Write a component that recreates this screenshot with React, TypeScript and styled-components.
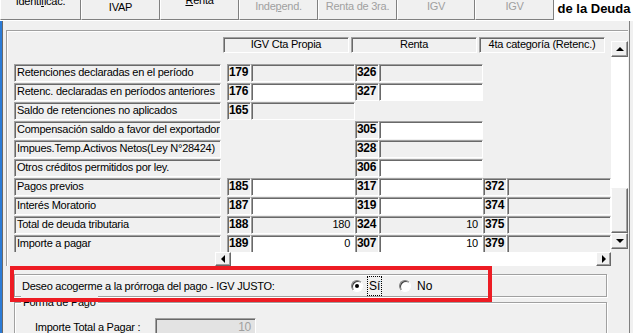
import React from "react";
import styled, { createGlobalStyle } from "styled-components";

const GlobalStyle = createGlobalStyle`
  html, body { margin: 0; padding: 0; background: #f0f0f0; }
  * { box-sizing: border-box; }
`;

const Page = styled.div`
  position: relative;
  width: 633px;
  height: 333px;
  overflow: hidden;
  display: flex;
  flex-direction: column;
  background: #f0f0f0;
  font-family: "Liberation Sans", Arial, sans-serif;
  font-size: 11px;
  letter-spacing: -0.25px;
  color: #000;
`;

const TabBar = styled.div`
  display: flex;
  height: 20px;
  flex: none;
`;

const Tab = styled.div<{ $w: number; $disabled?: boolean; $active?: boolean }>`
  width: ${(p) => p.$w}px;
  height: 20px;
  flex: none;
  overflow: hidden;
  text-align: center;
  background: ${(p) => (p.$active ? "#fff" : "#f0f0f0")};
  color: ${(p) => (p.$disabled ? "#a0a0a0" : "#000")};
  font-weight: ${(p) => (p.$active ? "bold" : "normal")};
  font-size: ${(p) => (p.$active ? "13px" : "11px")};
  letter-spacing: ${(p) => (p.$active ? "0" : "-0.25px")};
  border-left: 1px solid #fff;
  border-right: ${(p) => (p.$active ? "none" : "1px solid #808080")};
  border-bottom: ${(p) => (p.$active ? "none" : "1px solid #808080")};
  white-space: nowrap;
`;

const TabText = styled.span<{ $top: number }>`
  display: block;
  line-height: 12px;
  margin-top: ${(p) => p.$top}px;
`;

const Body = styled.div`
  flex: 1;
  display: flex;
  border-top: 1px solid #fff;
  min-height: 0;
`;

const LeftEdge = styled.div`
  width: 3px;
  flex: none;
  background: #2b7bd6;
  border-right: 1px solid #696969;
`;

const RightEdge = styled.div`
  width: 4px;
  flex: none;
  border-left: 1px solid #808080;
`;

const Main = styled.div`
  flex: 1;
  display: flex;
  flex-direction: column;
  padding: 9px 1px 0 3px;
  min-width: 0;
`;

const Panel = styled.div`
  display: flex;
  height: 236px;
  flex: none;
  padding: 6px 0 0 7px;
  border-top: 1px solid #a0a0a0;
  border-left: 1px solid #a0a0a0;
  box-shadow: inset 1px 1px #fff;
`;

const GridArea = styled.div`
  flex: 1;
  display: flex;
  flex-direction: column;
  min-width: 0;
`;

const HeaderRow = styled.div`
  display: flex;
  gap: 2px;
  height: 16px;
  padding-left: 209px;
  flex: none;
`;

const HeaderCell = styled.div`
  width: 126px;
  flex: none;
  text-align: center;
  line-height: 13px;
  border: 1px solid;
  border-color: #a0a0a0 #fff #fff #a0a0a0;
  box-shadow: inset 1px 1px #696969;
  white-space: nowrap;
  overflow: hidden;
`;

const RowsViewport = styled.div`
  margin-top: 11px;
  height: 188px;
  overflow: hidden;
  flex: none;
`;

const Row = styled.div`
  display: flex;
  height: 18px;
  margin-bottom: 1px;
`;

const Sunken = styled.div`
  height: 18px;
  flex: none;
  border: 1px solid;
  border-color: #a0a0a0 #fff #fff #a0a0a0;
  box-shadow: inset 1px 1px #696969;
  white-space: nowrap;
  overflow: hidden;
  line-height: 15px;
`;

const Label = styled(Sunken)`
  width: 207px;
  margin-right: 6px;
  padding-left: 2px;
`;

const Code = styled(Sunken)`
  width: 24px;
  font-weight: bold;
  font-size: 12px;
  letter-spacing: -0.3px;
  padding-left: 1px;
  background: #f0f0f0;
`;

const Field = styled(Sunken)<{ $editable?: boolean }>`
  width: 104px;
  text-align: right;
  padding-right: 4px;
  background: ${(p) => (p.$editable ? "#fff" : "#f0f0f0")};
`;

const Blank = styled.div`
  width: 128px;
  flex: none;
`;

const HScroll = styled.div`
  display: flex;
  height: 14px;
  margin-left: 201px;
  flex: none;
`;

const ScrollBtn = styled.div<{ $w: number; $h: number }>`
  width: ${(p) => p.$w}px;
  height: ${(p) => p.$h}px;
  flex: none;
  display: flex;
  align-items: center;
  justify-content: center;
  background: #f0f0f0;
  border: 1px solid;
  border-color: #fff #696969 #696969 #fff;
  box-shadow: inset -1px -1px #a0a0a0;
`;

const Track = styled.div<{ $h?: number }>`
  flex: ${(p) => (p.$h ? "none" : "1")};
  height: ${(p) => (p.$h ? `${p.$h}px` : "auto")};
  background: #fff;
`;

const VScroll = styled.div`
  width: 17px;
  flex: none;
  margin-top: 4px;
  height: 208px;
  display: flex;
  flex-direction: column;
`;

const Thumb = styled.div`
  height: 45px;
  flex: none;
  background: #f0f0f0;
  border: 1px solid;
  border-color: #f0f0f0 #696969 #696969 #fff;
  box-shadow: inset -1px -1px #a0a0a0;
`;

const Arrow = styled.div<{ $dir: "up" | "down" | "left" | "right" }>`
  width: 0;
  height: 0;
  border: 3px solid transparent;
  ${(p) =>
    p.$dir === "up"
      ? "border-bottom: 4px solid #000; border-top: none; border-left-width: 4px; border-right-width: 4px;"
      : p.$dir === "down"
      ? "border-top: 4px solid #000; border-bottom: none; border-left-width: 4px; border-right-width: 4px;"
      : p.$dir === "left"
      ? "border-right: 4px solid #000; border-left: none; border-top-width: 4px; border-bottom-width: 4px;"
      : "border-left: 4px solid #000; border-right: none; border-top-width: 4px; border-bottom-width: 4px;"}
`;

const GroupBox = styled.div<{ $mt: number; $h: number }>`
  margin: ${(p) => p.$mt}px 0 0 8px;
  width: 593px;
  height: ${(p) => p.$h}px;
  flex: none;
  border: 1px solid #a0a0a0;
  box-shadow: 1px 1px #fff, inset 1px 1px #fff;
`;

const QuestionRow = styled.div`
  display: flex;
  align-items: center;
  height: 100%;
  padding-left: 7px;
`;

const Question = styled.div`
  width: 329px;
  flex: none;
  white-space: nowrap;
`;

const RadioItem = styled.div<{ $w: number }>`
  display: flex;
  align-items: center;
  width: ${(p) => p.$w}px;
  flex: none;
`;

const RadioCircle = styled.div<{ $checked?: boolean }>`
  width: 12px;
  height: 12px;
  flex: none;
  border-radius: 50%;
  background: #fff;
  border: 1px solid;
  border-color: #808080 #fff #fff #808080;
  box-shadow: inset 1px 1px #404040;
  display: flex;
  align-items: center;
  justify-content: center;
  &::after {
    content: "";
    width: 4px;
    height: 4px;
    border-radius: 50%;
    background: ${(p) => (p.$checked ? "#000" : "transparent")};
  }
`;

const RadioText = styled.span<{ $focus?: boolean }>`
  margin-left: 4px;
  padding: 2px 1px;
  border: 1px dotted ${(p) => (p.$focus ? "#000" : "transparent")};
  font-size: 12px;
  letter-spacing: 0;
`;

const Legend = styled.div`
  width: fit-content;
  margin: -7px 0 0 6px;
  padding: 0 2px;
  background: #f0f0f0;
  line-height: 12px;
`;

const AmountRow = styled.div`
  display: flex;
  align-items: center;
  margin-top: 10px;
  padding-left: 20px;
`;

const AmountLabel = styled.div`
  width: 120px;
  flex: none;
  white-space: nowrap;
`;

const AmountField = styled.div`
  width: 101px;
  height: 18px;
  flex: none;
  text-align: right;
  padding-right: 4px;
  line-height: 16px;
  color: #a0a0a0;
  font-size: 12px;
  background: #e3e3e3;
  border: 1px solid;
  border-color: #a0a0a0 #fff #fff #a0a0a0;
  box-shadow: inset 1px 1px #696969;
`;

const RedMark = styled.div`
  position: absolute;
  left: 10px;
  top: 266px;
  width: 482px;
  height: 36px;
  border: 4px solid #ed1c24;
  pointer-events: none;
`;

type Cell = { code: string; editable?: boolean; value?: string } | null;

const rows: { label: string; cells: Cell[] }[] = [
  { label: "Retenciones declaradas en el período", cells: [{ code: "179" }, { code: "326" }, null] },
  { label: "Retenc. declaradas en períodos anteriores", cells: [{ code: "176", editable: true }, { code: "327", editable: true }, null] },
  { label: "Saldo de retenciones no aplicados", cells: [{ code: "165" }, null, null] },
  { label: "Compensación saldo a favor del exportador", cells: [null, { code: "305", editable: true }, null] },
  { label: "Impues.Temp.Activos Netos(Ley N°28424)", cells: [null, { code: "328" }, null] },
  { label: "Otros créditos permitidos por ley.", cells: [null, { code: "306", editable: true }, null] },
  { label: "Pagos previos", cells: [{ code: "185", editable: true }, { code: "317", editable: true }, { code: "372" }] },
  { label: "Interés Moratorio", cells: [{ code: "187", editable: true }, { code: "319", editable: true }, { code: "374" }] },
  { label: "Total de deuda tributaria", cells: [{ code: "188", value: "180" }, { code: "324", value: "10" }, { code: "375" }] },
  { label: "Importe a pagar", cells: [{ code: "189", editable: true, value: "0" }, { code: "307", editable: true, value: "10" }, { code: "379" }] },
];

const tabs = [
  { w: 81, top: -5, text: <>Identi<u>f</u>icac.</> },
  { w: 79, top: 1, text: <>IVAP</> },
  { w: 79, top: -6, text: <><u>R</u>enta</> },
  { w: 79, top: 0, disabled: true, text: <>Inde<u>p</u>end.</> },
  { w: 79, top: 0, disabled: true, text: <>Renta de 3ra.</> },
  { w: 78, top: 0, disabled: true, text: <>IGV</> },
  { w: 79, top: 0, disabled: true, text: <>IGV</> },
];

export default function App() {
  return (
    <>
      <GlobalStyle />
      <Page>
        <TabBar>
          {tabs.map((t, i) => (
            <Tab key={i} $w={t.w} $disabled={t.disabled}>
              <TabText $top={t.top}>{t.text}</TabText>
            </Tab>
          ))}
          <Tab $w={79} $active>
            <TabText $top={3}>de la Deuda</TabText>
          </Tab>
        </TabBar>
        <Body>
          <LeftEdge />
          <Main>
            <Panel>
              <GridArea>
                <HeaderRow>
                  <HeaderCell>IGV Cta Propia</HeaderCell>
                  <HeaderCell>Renta</HeaderCell>
                  <HeaderCell>4ta categoría (Retenc.)</HeaderCell>
                </HeaderRow>
                <RowsViewport>
                  {rows.map((r) => (
                    <Row key={r.label}>
                      <Label>{r.label}</Label>
                      {r.cells.map((c, i) =>
                        c ? (
                          <React.Fragment key={i}>
                            <Code>{c.code}</Code>
                            <Field $editable={c.editable}>{c.value}</Field>
                          </React.Fragment>
                        ) : (
                          <Blank key={i} />
                        )
                      )}
                    </Row>
                  ))}
                </RowsViewport>
                <HScroll>
                  <ScrollBtn $w={16} $h={14}>
                    <Arrow $dir="left" />
                  </ScrollBtn>
                  <Track />
                  <ScrollBtn $w={15} $h={14}>
                    <Arrow $dir="right" />
                  </ScrollBtn>
                </HScroll>
              </GridArea>
              <VScroll>
                <ScrollBtn $w={17} $h={16}>
                  <Arrow $dir="up" />
                </ScrollBtn>
                <Track $h={131} />
                <Thumb />
                <ScrollBtn $w={17} $h={16}>
                  <Arrow $dir="down" />
                </ScrollBtn>
              </VScroll>
            </Panel>
            <GroupBox $mt={8} $h={23}>
              <QuestionRow>
                <Question>Deseo acogerme a la prórroga del pago - IGV JUSTO:</Question>
                <RadioItem $w={48}>
                  <RadioCircle $checked />
                  <RadioText $focus>Sí</RadioText>
                </RadioItem>
                <RadioItem $w={48}>
                  <RadioCircle />
                  <RadioText>No</RadioText>
                </RadioItem>
              </QuestionRow>
            </GroupBox>
            <GroupBox $mt={5} $h={60}>
              <Legend>Forma de Pago</Legend>
              <AmountRow>
                <AmountLabel>Importe Total a Pagar :</AmountLabel>
                <AmountField>10</AmountField>
              </AmountRow>
            </GroupBox>
          </Main>
          <RightEdge />
        </Body>
        <RedMark />
      </Page>
    </>
  );
}
